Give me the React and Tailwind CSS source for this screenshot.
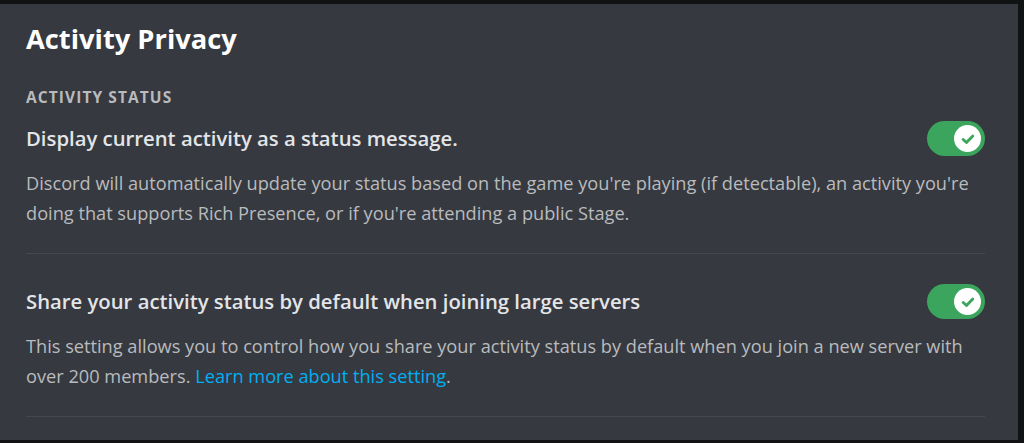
import { useState } from 'react'

function Toggle({ on, onChange }) {
  return (
    <button
      onClick={() => onChange(!on)}
      className={`relative flex h-[35px] w-[58px] shrink-0 items-center rounded-full px-[4px] ${
        on ? 'justify-end bg-[#3ba55d]' : 'justify-start bg-[#72767d]'
      }`}
    >
      <span className="flex h-[27px] w-[27px] items-center justify-center rounded-full bg-white">
        {on && (
          <svg viewBox="0 0 20 20" className="h-[20px] w-[20px]">
            <path
              d="M5.2 10.4 L8.5 13.5 L14.8 7"
              fill="none"
              stroke="#3ba55d"
              strokeWidth="2.8"
              strokeLinecap="round"
              strokeLinejoin="round"
            />
          </svg>
        )}
      </span>
    </button>
  )
}

function SettingRow({ title, children, on, onChange, first }) {
  return (
    <div className={first ? '' : 'pt-[30px]'}>
      <div className="flex items-center justify-between">
        <h3 className="text-[20.3px] font-semibold leading-[35px] text-[#e3e5e8]">{title}</h3>
        <Toggle on={on} onChange={onChange} />
      </div>
      <p className="mt-[12px] text-[18.2px] leading-[30px] text-[#b9bbbe]">{children}</p>
      <div className="mt-[25px] h-px bg-[#45484e]" />
    </div>
  )
}

export default function App() {
  const [showActivity, setShowActivity] = useState(true)
  const [shareDefault, setShareDefault] = useState(true)

  return (
    <div
      className="h-[443px] w-full overflow-hidden bg-[#111214] pt-[4px] pr-[6px] pb-[3px]"
      style={{ fontFamily: '"Open Sans", "Noto Sans", sans-serif' }}
    >
      <div className="h-full bg-[#36393f] pl-[26px] pr-[33px] pt-[18px]">
        <h2 className="text-[27.3px] font-bold leading-[34px] text-white">Activity Privacy</h2>

        <div className="mt-[31px] text-[15.5px] font-bold uppercase leading-[20px] tracking-[0.07em] text-[#b9bbbe]">
          Activity Status
        </div>

        <div className="mt-[14px]">
          <SettingRow
            first
            title="Display current activity as a status message."
            on={showActivity}
            onChange={setShowActivity}
          >
            Discord will automatically update your status based on the game you're playing (if detectable), an activity you're
            <br />
            doing that supports Rich Presence, or if you're attending a public Stage.
          </SettingRow>

          <SettingRow
            title="Share your activity status by default when joining large servers"
            on={shareDefault}
            onChange={setShareDefault}
          >
            This setting allows you to control how you share your activity status by default when you join a new server with
            <br />
            over 200 members.{' '}
            <a href="#" className="text-[#00aff4]">
              Learn more about this setting
            </a>
            .
          </SettingRow>
        </div>
      </div>
    </div>
  )
}
